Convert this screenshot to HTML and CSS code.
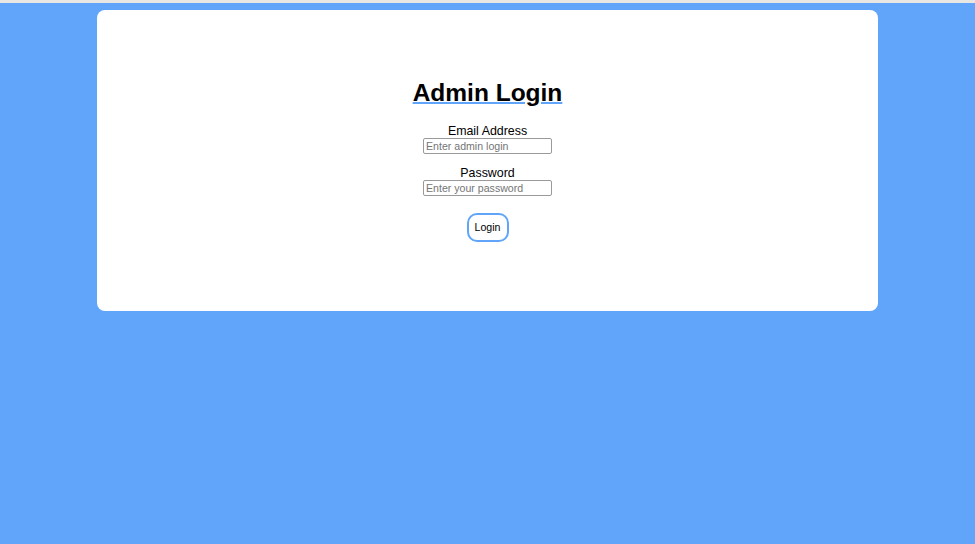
FILE: index.html
```html
<!DOCTYPE html>
<html lang="en">
<head>
<meta charset="utf-8">
<title>Admin Login</title>
<link rel="stylesheet" href="styles.css">
</head>
<body>
<div class="topline"></div>
<main class="card">
  <h1 class="title">Admin Login</h1>
  <form class="login-form">
    <div class="field">
      <label class="label" for="email">Email Address</label>
      <input class="input" id="email" type="email" placeholder="Enter admin login">
    </div>
    <div class="field field-second">
      <label class="label" for="password">Password</label>
      <input class="input" id="password" type="password" placeholder="Enter your password">
    </div>
    <button class="btn" type="button">Login</button>
  </form>
</main>
</body>
</html>
```

FILE: styles.css
```css
html, body {
  margin: 0;
  padding: 0;
}
body {
  background: #60a5fa;
  min-height: 544px;
  font-family: "Liberation Sans", Arial, sans-serif;
  color: #000;
}
.topline {
  height: 3px;
  background: #e9e7e4;
}
.card {
  width: 781px;
  margin: 7px auto 0;
  background: #fff;
  border-radius: 8px;
  padding: 69px 0;
  display: flex;
  flex-direction: column;
  align-items: center;
  box-sizing: border-box;
}
.title {
  margin: 0;
  font-size: 24.5px;
  line-height: 28px;
  font-weight: bold;
  text-decoration: underline;
  text-decoration-color: #60a5fa;
  text-decoration-thickness: 2px;
}
.login-form {
  margin-top: 17px;
  display: flex;
  flex-direction: column;
  align-items: center;
}
.field {
  display: flex;
  flex-direction: column;
  align-items: center;
}
.field-second {
  margin-top: 12px;
}
.label {
  font-size: 12.4px;
  line-height: 14px;
}
.input {
  box-sizing: border-box;
  width: 129px;
  height: 16px;
  margin: 0;
  padding: 0 2px;
  border: 1px solid #9a9a9a;
  border-radius: 2px;
  font-family: "Liberation Sans", Arial, sans-serif;
  font-size: 10.6px;
  line-height: 14px;
  color: #000;
  background: #fff;
}
.input::placeholder {
  color: #757575;
}
.btn {
  margin-top: 17px;
  box-sizing: border-box;
  width: 42px;
  height: 29px;
  padding: 0;
  border: 2px solid #60a5fa;
  border-radius: 10px;
  background: #fff;
  font-family: "Liberation Sans", Arial, sans-serif;
  font-size: 10.6px;
  line-height: 11px;
  color: #000;
}
```
